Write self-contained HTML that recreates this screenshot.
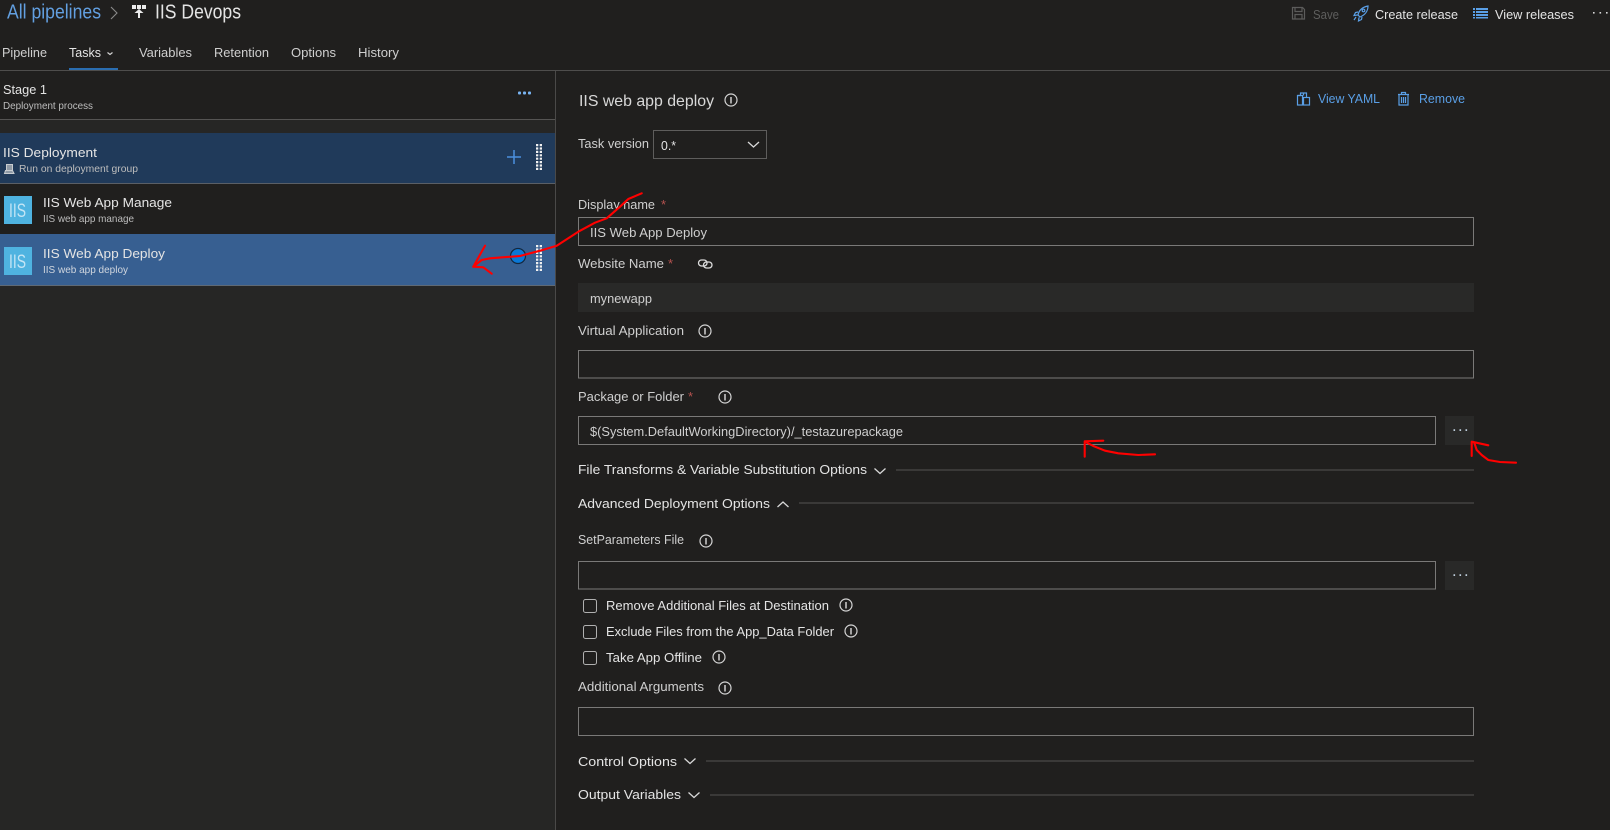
<!DOCTYPE html>
<html lang="en">
<head>
<meta charset="utf-8">
<title>IIS Devops - Tasks</title>
<style>
html,body{margin:0;padding:0;width:1610px;height:830px;overflow:hidden;background:#201f1e}
svg{display:block;position:absolute;left:0;top:0}
text{font-family:"Liberation Sans",sans-serif;font-size:13px;fill:#cfcfcf}
.w{fill:#e4e4e4}
.b{fill:#5a9fe6}
.s{font-size:10.5px;fill:#bdbdbd}
.i{fill:none;stroke:#d4d4d4;stroke-width:1.2}
.inp{fill:none;stroke:#7a7978;stroke-width:1}
.ln{fill:#3a3938}
.ch{fill:none;stroke:#d8d8d8;stroke-width:1.3}
.cb{fill:none;stroke:#b0b0b0;stroke-width:1}
.ar{fill:none;stroke:#f00;stroke-width:2.1;stroke-linejoin:round;stroke-linecap:round}
.ic{fill:none;stroke:#5a9fe6;stroke-width:1.2}
.iis{font-size:19px;fill:#cfeaf7;fill-opacity:.9}
</style>
</head>
<body>
<svg width="1610" height="830" viewBox="0 0 1610 830" xmlns="http://www.w3.org/2000/svg">
<rect width="1610" height="830" fill="#201f1e"/>

<!-- Header -->
<text x="7" y="18.500" class="b" style="font-size:20px;fill:#629fe0" textLength="94" lengthAdjust="spacingAndGlyphs">All pipelines</text>
<path d="M111 7l6 6-6 6" fill="none" stroke="#8a8a8a" stroke-width="1.100"/>
<g fill="#ececec">
<rect x="132" y="5" width="4" height="4"/><rect x="137" y="5" width="4" height="4"/><rect x="142" y="5" width="4" height="4"/>
<path d="M139 9l4.500 4h-3.500v5h-2v-5h-3.500z"/>
</g>
<text x="155" y="18.500" class="w" style="font-size:20px" textLength="86" lengthAdjust="spacingAndGlyphs">IIS Devops</text>

<!-- Top right commands -->
<g fill="none" stroke="#5c5c5b" stroke-width="1.200">
<path d="M1292.500 7.500h10l2 2v9.500h-12z"/><path d="M1295 7.500v4h7v-4M1295 19v-4.500h7v4.500"/>
</g>
<text x="1313" y="19" style="fill:#5e5e5d" textLength="26" lengthAdjust="spacingAndGlyphs">Save</text>
<g class="ic">
<path d="M1358 15c1-5 5-8 10-9 0 5-3 9-8 11z"/><circle cx="1363.500" cy="10.500" r="1.300"/>
<path d="M1358 12l-2.500 .5-1.500 3 3.500-.5M1362 17l-.5 2.500-3 1.500.5-3.500M1356 17l-2 3"/>
</g>
<text x="1375" y="19" class="w" textLength="83" lengthAdjust="spacingAndGlyphs">Create release</text>
<g fill="#5a9fe6">
<rect x="1473" y="8" width="2" height="2"/><rect x="1473" y="11" width="2" height="2"/><rect x="1473" y="14" width="2" height="2"/><rect x="1473" y="17" width="2" height="1.500"/>
<rect x="1476" y="8" width="12" height="2"/><rect x="1476" y="11" width="12" height="2"/><rect x="1476" y="14" width="12" height="2"/><rect x="1476" y="17" width="12" height="1.500"/>
</g>
<text x="1495" y="19" class="w" textLength="79" lengthAdjust="spacingAndGlyphs">View releases</text>
<g fill="#d8d8d8"><rect x="1593" y="12" width="1.600" height="1.600"/><rect x="1599.500" y="12" width="1.600" height="1.600"/><rect x="1606" y="12" width="1.600" height="1.600"/></g>

<!-- Tabs -->
<text x="2" y="57" textLength="45" lengthAdjust="spacingAndGlyphs">Pipeline</text>
<text x="69" y="57" class="w" textLength="32" lengthAdjust="spacingAndGlyphs">Tasks</text>
<path d="M107.500 52.500l2.500 2 2.500-2" fill="none" stroke="#d4d4d4" stroke-width="1.200"/>
<rect x="69" y="68" width="49" height="2" fill="#2a6db0"/>
<text x="139" y="57" textLength="53" lengthAdjust="spacingAndGlyphs">Variables</text>
<text x="214" y="57" textLength="55" lengthAdjust="spacingAndGlyphs">Retention</text>
<text x="291" y="57" textLength="45" lengthAdjust="spacingAndGlyphs">Options</text>
<text x="358" y="57" textLength="41" lengthAdjust="spacingAndGlyphs">History</text>
<rect x="0" y="70" width="1610" height="1" fill="#4e4d4c"/>

<!-- Left panel -->
<rect x="0" y="120" width="555" height="13" fill="#262625"/>
<rect x="0" y="119" width="555" height="1" fill="#555453"/>
<rect x="555" y="71" width="1" height="759" fill="#4a4948"/>
<text x="3" y="94" class="w" textLength="44" lengthAdjust="spacingAndGlyphs">Stage 1</text>
<text x="3" y="109" class="s" textLength="90" lengthAdjust="spacingAndGlyphs">Deployment process</text>
<g fill="#79b4f2"><rect x="518" y="91.500" width="3" height="3" rx="1"/><rect x="523" y="91.500" width="3" height="3" rx="1"/><rect x="528" y="91.500" width="3" height="3" rx="1"/></g>

<rect x="0" y="133" width="555" height="50" fill="#203a5a"/>
<rect x="0" y="183" width="555" height="1" fill="#5a5f66"/>
<text x="3" y="157" class="w" textLength="94" lengthAdjust="spacingAndGlyphs">IIS Deployment</text>
<g fill="#8f9aa6" stroke="#c8ccd0" stroke-width="1">
<rect x="6.500" y="164.500" width="6" height="6"/><path d="M4.500 173.500h9.500l-1.500-3h-7z"/>
</g>
<text x="19" y="172" class="s" textLength="119" lengthAdjust="spacingAndGlyphs">Run on deployment group</text>
<path d="M514 150v14M507 157h14" stroke="#4b8fde" stroke-width="1.500" fill="none"/>
<path fill="#f0f0f0" d="M536 144h2.300v2.200h-2.300zM539.700 144h2.300v2.200h-2.300zM536 147.400h2.300v2.200h-2.300zM539.700 147.400h2.300v2.200h-2.300zM536 150.800h2.300v2.200h-2.300zM539.700 150.800h2.300v2.200h-2.300zM536 154.200h2.300v2.200h-2.300zM539.700 154.200h2.300v2.200h-2.300zM536 157.600h2.300v2.200h-2.300zM539.700 157.600h2.300v2.200h-2.300zM536 161h2.300v2.200h-2.300zM539.700 161h2.300v2.200h-2.300zM536 164.400h2.300v2.200h-2.300zM539.700 164.400h2.300v2.200h-2.300zM536 167.800h2.300v2.200h-2.300zM539.700 167.800h2.300v2.200h-2.300z"/>

<rect x="4" y="196" width="28" height="28" fill="#4fb3e0"/>
<text x="9" y="217" class="iis" textLength="17" lengthAdjust="spacingAndGlyphs">IIS</text>
<text x="43" y="207" class="w" textLength="129" lengthAdjust="spacingAndGlyphs">IIS Web App Manage</text>
<text x="43" y="222" class="s" textLength="91" lengthAdjust="spacingAndGlyphs">IIS web app manage</text>

<rect x="0" y="234" width="555" height="51" fill="#375f91"/>
<rect x="0" y="285" width="555" height="1" fill="#5f6974"/>
<rect x="0" y="286" width="555" height="544" fill="#262625"/>
<rect x="4" y="247" width="28" height="28" fill="#4fb3e0"/>
<text x="9" y="268" class="iis" textLength="17" lengthAdjust="spacingAndGlyphs">IIS</text>
<text x="43" y="258" class="w" textLength="122" lengthAdjust="spacingAndGlyphs">IIS Web App Deploy</text>
<text x="43" y="273" class="s" style="fill:#d0d6de" textLength="85" lengthAdjust="spacingAndGlyphs">IIS web app deploy</text>
<circle cx="518" cy="256" r="7.500" fill="#0a78d7" stroke="#14283f" stroke-width="1.200"/>
<path fill="#f0f0f0" d="M536 245h2.300v2.200h-2.300zM539.700 245h2.300v2.200h-2.300zM536 248.400h2.300v2.200h-2.300zM539.700 248.400h2.300v2.200h-2.300zM536 251.800h2.300v2.200h-2.300zM539.700 251.800h2.300v2.200h-2.300zM536 255.200h2.300v2.200h-2.300zM539.700 255.200h2.300v2.200h-2.300zM536 258.600h2.300v2.200h-2.300zM539.700 258.600h2.300v2.200h-2.300zM536 262h2.300v2.200h-2.300zM539.700 262h2.300v2.200h-2.300zM536 265.400h2.300v2.200h-2.300zM539.700 265.400h2.300v2.200h-2.300zM536 268.800h2.300v2.200h-2.300zM539.700 268.800h2.300v2.200h-2.300z"/>

<!-- Right panel header -->
<text x="579" y="106" class="w" style="font-size:16px;fill:#d8d8d8" textLength="135" lengthAdjust="spacingAndGlyphs">IIS web app deploy</text>
<circle cx="731" cy="100" r="6" class="i"/><rect x="730.300" y="97" width="1.400" height="6.500" fill="#dcdcdc"/>
<g class="ic"><path d="M1297.500 95.500h3v-2.500h3v2.500M1303.500 93h3v4"/><rect x="1297.500" y="95.500" width="5" height="9.500"/><rect x="1303.500" y="97.500" width="6" height="7.500"/></g>
<text x="1318" y="103" class="b" textLength="62" lengthAdjust="spacingAndGlyphs">View YAML</text>
<g class="ic"><path d="M1398 94.500h11M1401.500 94.500v-2h4v2"/><path d="M1399 94.500v10.500h9v-10.500M1401.500 97v6M1403.500 97v6M1405.500 97v6"/></g>
<text x="1419" y="103" class="b" textLength="46" lengthAdjust="spacingAndGlyphs">Remove</text>

<!-- Task version -->
<text x="578" y="148" textLength="71" lengthAdjust="spacingAndGlyphs">Task version</text>
<rect x="653.500" y="130.500" width="113" height="28" fill="none" stroke="#5e5d5c"/>
<text x="661" y="150" class="w" textLength="15" lengthAdjust="spacingAndGlyphs">0.*</text>
<path d="M748 142l5.500 5 5.500-5" class="ch"/>

<!-- Display name -->
<text x="578" y="209" textLength="77" lengthAdjust="spacingAndGlyphs">Display name</text>
<text x="661" y="209" style="fill:#b5524f">*</text>
<rect x="578.500" y="217.500" width="895" height="28" class="inp"/>
<text x="590" y="237" textLength="117" lengthAdjust="spacingAndGlyphs">IIS Web App Deploy</text>

<!-- Website name -->
<text x="578" y="268" textLength="86" lengthAdjust="spacingAndGlyphs">Website Name</text>
<text x="668" y="268" style="fill:#b5524f">*</text>
<g fill="none" stroke="#dcdcdc" stroke-width="1.300"><rect x="698.500" y="260" width="8.500" height="6" rx="3"/><rect x="703.500" y="262" width="8.500" height="6" rx="3"/></g>
<rect x="578" y="283" width="896" height="29" fill="#292928"/>
<text x="590" y="303" textLength="62" lengthAdjust="spacingAndGlyphs">mynewapp</text>

<!-- Virtual application -->
<text x="578" y="335" textLength="106" lengthAdjust="spacingAndGlyphs">Virtual Application</text>
<circle cx="705" cy="331" r="6" class="i"/><rect x="704.300" y="328" width="1.400" height="6.500" fill="#dcdcdc"/>
<rect x="578.500" y="350.500" width="895" height="27.500" class="inp"/>

<!-- Package -->
<text x="578" y="401" textLength="106" lengthAdjust="spacingAndGlyphs">Package or Folder</text>
<text x="688" y="401" style="fill:#b5524f">*</text>
<circle cx="725" cy="397" r="6" class="i"/><rect x="724.300" y="394" width="1.400" height="6.500" fill="#dcdcdc"/>
<rect x="578.500" y="416.500" width="857" height="28" class="inp"/>
<text x="590" y="436" textLength="313" lengthAdjust="spacingAndGlyphs">$(System.DefaultWorkingDirectory)/_testazurepackage</text>
<rect x="1445" y="416" width="29" height="29" fill="#292928"/>
<g fill="#cfe0f0"><rect x="1453.500" y="429.300" width="1.600" height="1.600"/><rect x="1459.500" y="429.300" width="1.600" height="1.600"/><rect x="1465.500" y="429.300" width="1.600" height="1.600"/></g>

<!-- Sections -->
<text x="578" y="474" class="w" textLength="289" lengthAdjust="spacingAndGlyphs">File Transforms &amp; Variable Substitution Options</text>
<path d="M874.500 468.500l5.500 5 5.500-5" class="ch"/>
<rect x="896" y="469" width="578" height="2" class="ln"/>
<text x="578" y="508" class="w" textLength="192" lengthAdjust="spacingAndGlyphs">Advanced Deployment Options</text>
<path d="M777.500 507l5.500-5 5.500 5" class="ch"/>
<rect x="799" y="502" width="675" height="2" class="ln"/>

<!-- SetParameters -->
<text x="578" y="544" textLength="106" lengthAdjust="spacingAndGlyphs">SetParameters File</text>
<circle cx="706" cy="541" r="6" class="i"/><rect x="705.300" y="538" width="1.400" height="6.500" fill="#dcdcdc"/>
<rect x="578.500" y="561.500" width="857" height="27.500" class="inp"/>
<rect x="1445" y="561" width="29" height="29" fill="#292928"/>
<g fill="#cfe0f0"><rect x="1453.500" y="574.300" width="1.600" height="1.600"/><rect x="1459.500" y="574.300" width="1.600" height="1.600"/><rect x="1465.500" y="574.300" width="1.600" height="1.600"/></g>

<!-- Checkboxes -->
<rect x="583.500" y="599.500" width="13" height="13" rx="2" class="cb"/>
<text x="606" y="610" class="w" textLength="223" lengthAdjust="spacingAndGlyphs">Remove Additional Files at Destination</text>
<circle cx="846" cy="605" r="6" class="i"/><rect x="845.300" y="602" width="1.400" height="6.500" fill="#dcdcdc"/>
<rect x="583.500" y="625.500" width="13" height="13" rx="2" class="cb"/>
<text x="606" y="636" class="w" textLength="228" lengthAdjust="spacingAndGlyphs">Exclude Files from the App_Data Folder</text>
<circle cx="851" cy="631" r="6" class="i"/><rect x="850.300" y="628" width="1.400" height="6.500" fill="#dcdcdc"/>
<rect x="583.500" y="651.500" width="13" height="13" rx="2" class="cb"/>
<text x="606" y="662" class="w" textLength="96" lengthAdjust="spacingAndGlyphs">Take App Offline</text>
<circle cx="719" cy="657" r="6" class="i"/><rect x="718.300" y="654" width="1.400" height="6.500" fill="#dcdcdc"/>

<!-- Additional arguments -->
<text x="578" y="691" textLength="126" lengthAdjust="spacingAndGlyphs">Additional Arguments</text>
<circle cx="725" cy="688" r="6" class="i"/><rect x="724.300" y="685" width="1.400" height="6.500" fill="#dcdcdc"/>
<rect x="578.500" y="707.500" width="895" height="28" class="inp"/>

<text x="578" y="766" class="w" textLength="99" lengthAdjust="spacingAndGlyphs">Control Options</text>
<path d="M684.500 758.500l5.500 5 5.500-5" class="ch"/>
<rect x="706" y="760" width="768" height="2" class="ln"/>
<text x="578" y="799" class="w" textLength="103" lengthAdjust="spacingAndGlyphs">Output Variables</text>
<path d="M688.500 792.500l5.500 5 5.500-5" class="ch"/>
<rect x="710" y="794" width="764" height="2" class="ln"/>

<!-- Red annotations -->
<path class="ar" d="M641.700 193.300L628.300 199 620 206.700 606.700 218.300 595 222.700 578.300 231.700 556.700 245.700 540 250.700 520 256 490 258.300 481.700 260 473.300 266.700"/>
<path class="ar" d="M485 245.700L473.300 266.700 483.300 267.300 491.700 273.700"/>
<path class="ar" d="M1155 454.300L1138.300 455 1118.300 453.300 1105 450.700 1093.300 446 1085 441.700"/>
<path class="ar" d="M1084.700 456.700V441.300L1103.300 440.700"/>
<path class="ar" d="M1516 462.700L1500 462 1488.300 460 1481.700 455 1476.700 450 1474.300 442.700"/>
<path class="ar" d="M1471.700 456V441.700L1488.300 445.300"/>
</svg>
</body>
</html>
